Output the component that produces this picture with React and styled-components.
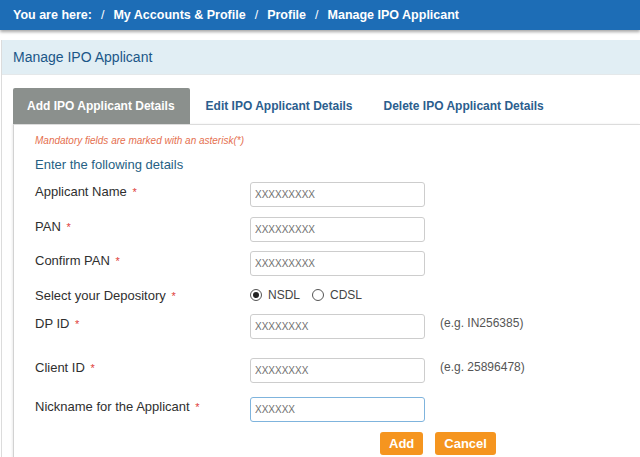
import React from "react"
import styled, { createGlobalStyle } from "styled-components"

const GlobalStyle = createGlobalStyle`
* { box-sizing: border-box; }
body {
    margin: 0;
    background: #ffffff;
    font-family: "Liberation Sans", Arial, sans-serif;
}
`

const crumbs = ["You are here:", "My Accounts & Profile", "Profile", "Manage IPO Applicant"]
const tabs = ["Add IPO Applicant Details", "Edit IPO Applicant Details", "Delete IPO Applicant Details"]

function Field({ label, value, hint, focused, gap }) {
    return (
        <FormRow $gap={gap}>
            <Label>{label} <Star>*</Star></Label>
            <Input defaultValue={value} $focused={focused} />
            {hint && <Hint>{hint}</Hint>}
        </FormRow>
    )
}

function App() {
    return (
        <>
            <GlobalStyle />
            <TopBar>
                {crumbs.map((c, i) => (
                    <React.Fragment key={c}>
                        {i > 0 && <Slash>/</Slash>}
                        <span>{c}</span>
                    </React.Fragment>
                ))}
            </TopBar>

            <Panel>
                <PanelHeader>Manage IPO Applicant</PanelHeader>
                <PanelBody>
                    <Tabs>
                        {tabs.map((t, i) => (
                            <Tab key={t} $active={i === 0}>{t}</Tab>
                        ))}
                    </Tabs>
                    <TabContent>
                        <Note>Mandatory fields are marked with an asterisk(*)</Note>
                        <Heading>Enter the following details</Heading>

                        <Field label="Applicant Name" value="XXXXXXXXX" gap={10} />
                        <Field label="PAN" value="XXXXXXXXX" gap={9} />
                        <Field label="Confirm PAN" value="XXXXXXXXX" gap={10} />

                        <FormRow $gap={10}>
                            <Label>Select your Depository <Star>*</Star></Label>
                            <Radios>
                                <RadioItem>
                                    <Radio $checked />
                                    NSDL
                                </RadioItem>
                                <RadioItem>
                                    <Radio />
                                    CDSL
                                </RadioItem>
                            </Radios>
                        </FormRow>

                        <Field label="DP ID" value="XXXXXXXX" hint="(e.g. IN256385)" gap={19} />
                        <Field label="Client ID" value="XXXXXXXX" hint="(e.g. 25896478)" gap={14} />
                        <Field label="Nickname for the Applicant" value="XXXXXX" focused gap={10} />

                        <Buttons>
                            <Button>Add</Button>
                            <Button>Cancel</Button>
                        </Buttons>
                    </TabContent>
                </PanelBody>
            </Panel>
        </>
    )
}

export default App

const TopBar = styled.div`
height: 30px;
background: #1d6db6;
box-shadow: 0 2px 3px rgba(0,0,0,0.35);
display: flex;
align-items: center;
padding-left: 13px;
color: #ffffff;
font-weight: 700;
font-size: 12.5px;
`
const Slash = styled.span`
margin: 0 9px;
font-weight: 400;
`
const Panel = styled.div`
margin: 10px 0 0 1px;
border-left: 1px solid #dcdcdc;
`
const PanelHeader = styled.div`
height: 35px;
background: #e1eef4;
border-bottom: 1px solid #e4e8ea;
display: flex;
align-items: center;
padding-left: 11px;
color: #1b5788;
font-size: 14px;
`
const PanelBody = styled.div`
padding: 13px 0 0 11px;
`
const Tabs = styled.div`
display: flex;
`
const Tab = styled.div`
height: 36px;
padding: 0 15px 0 14px;
margin-right: 2px;
display: flex;
align-items: center;
font-size: 12px;
font-weight: 700;
color: ${p => p.$active ? "#ffffff" : "#2b5e8e"};
background: ${p => p.$active ? "#8b908d" : "transparent"};
border-radius: 2px 2px 0 0;
`
const TabContent = styled.div`
border-top: 1px solid #dcdcdc;
border-left: 1px solid #d2d2d2;
box-shadow: -1px 0 2px rgba(0,0,0,0.08);
padding: 10px 0 10px 21px;
height: 340px;
`
const Note = styled.div`
font-size: 10px;
font-style: italic;
color: #e5704f;
line-height: 12px;
`
const Heading = styled.div`
margin: 10px 0 9px;
font-size: 13px;
color: #265f84;
line-height: 16px;
`
const FormRow = styled.div`
display: grid;
grid-template-columns: 215px 175px auto;
align-items: start;
margin-bottom: ${p => p.$gap}px;
`
const Label = styled.div`
font-size: 13px;
color: #2f2f2f;
line-height: 16px;
padding-top: 2px;
`
const Star = styled.span`
color: #e0403c;
font-size: 11px;
vertical-align: top;
margin-left: 2px;
`
const Input = styled.input`
width: 175px;
height: 25px;
border: 1px solid ${p => p.$focused ? "#7fb4dd" : "#cdcdcd"};
border-radius: 3px;
padding: 0 4px;
font-family: "Liberation Sans", Arial, sans-serif;
font-size: 10px;
color: #6f6f6f;
outline: none;
`
const Hint = styled.div`
margin-left: 15px;
font-size: 12px;
color: #555555;
line-height: 16px;
padding-top: 1px;
`
const Radios = styled.div`
display: flex;
gap: 12px;
padding-top: 1px;
`
const RadioItem = styled.label`
display: flex;
align-items: center;
gap: 6px;
font-size: 12px;
color: #444444;
line-height: 16px;
`
const Radio = styled.span`
width: 12px;
height: 12px;
border-radius: 50%;
border: 1px solid #555555;
display: flex;
align-items: center;
justify-content: center;
&::after {
    content: "";
    width: 6px;
    height: 6px;
    border-radius: 50%;
    background: ${p => p.$checked ? "#222222" : "transparent"};
}
`
const Buttons = styled.div`
display: flex;
gap: 12px;
margin-left: 345px;
`
const Button = styled.button`
height: 23px;
padding: 0 9px;
border: none;
border-radius: 3px;
background: #f5951f;
color: #ffffff;
font-family: "Liberation Sans", Arial, sans-serif;
font-size: 13px;
font-weight: 700;
`
